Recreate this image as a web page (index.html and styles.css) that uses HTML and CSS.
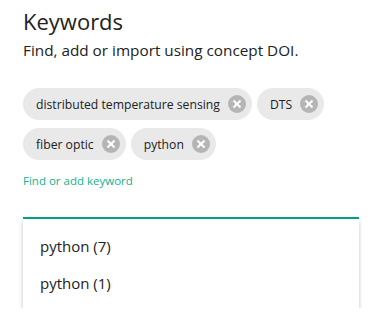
FILE: index.html
```html
<!DOCTYPE html>
<html>
<head>
    <link rel="stylesheet" href="styles.css">
</head>
<body>
    <div class="field">
        <h2 class="title">Keywords</h2>
        <p class="hint">Find, add or import using concept DOI.</p>

        <div class="chips">
            <span class="chip">distributed temperature sensing<span class="remove"></span></span>
            <span class="chip">DTS<span class="remove"></span></span>
            <span class="chip">fiber optic<span class="remove"></span></span>
            <span class="chip">python<span class="remove"></span></span>
        </div>

        <a class="add-link" href="#">Find or add keyword</a>

        <div class="search">
            <div class="search-line"></div>
            <ul class="results">
                <li>python (7)</li>
                <li>python (1)</li>
            </ul>
        </div>
    </div>
</body>
</html>
```

FILE: styles.css
```css
body {
    margin: 0;
    font-family: "Open Sans", "Noto Sans", sans-serif;
    color: #222;
    background: #fff;
}

.field {
    padding: 6px 21px 0 23px;
}

.title {
    margin: 0;
    font-size: 22px;
    font-weight: 400;
    line-height: 30px;
}

.hint {
    margin: 4px 0 0;
    font-size: 15.3px;
    line-height: 20px;
}

.chips {
    display: flex;
    flex-wrap: wrap;
    gap: 8px 5px;
    margin-top: 28px;
}

.chip {
    display: inline-flex;
    align-items: center;
    height: 32px;
    padding: 0 6px 0 13px;
    border-radius: 16px;
    background: #e9e9e9;
    font-size: 12.2px;
}

.remove {
    position: relative;
    width: 18px;
    height: 18px;
    margin-left: 8px;
    border-radius: 50%;
    background: #b5b5b5;
}

.remove::before, .remove::after {
    content: "";
    position: absolute;
    left: 4px;
    top: 8px;
    width: 10px;
    height: 2px;
    background: #fff;
    transform: rotate(45deg);
}

.remove::after {
    transform: rotate(-45deg);
}

.add-link {
    display: block;
    margin-top: 13px;
    font-size: 11.5px;
    line-height: 16px;
    color: #13b091;
    text-decoration: none;
}

.search {
    margin-top: 28px;
}

.search-line {
    height: 2px;
    background: #00a482;
}

.results {
    list-style: none;
    margin: 0;
    padding: 9px 0 6px;
    box-shadow: 0 2px 4px rgba(0, 0, 0, 0.25);
}

.results li {
    padding: 0 17px;
    height: 37px;
    line-height: 37px;
    font-size: 15px;
}
```
